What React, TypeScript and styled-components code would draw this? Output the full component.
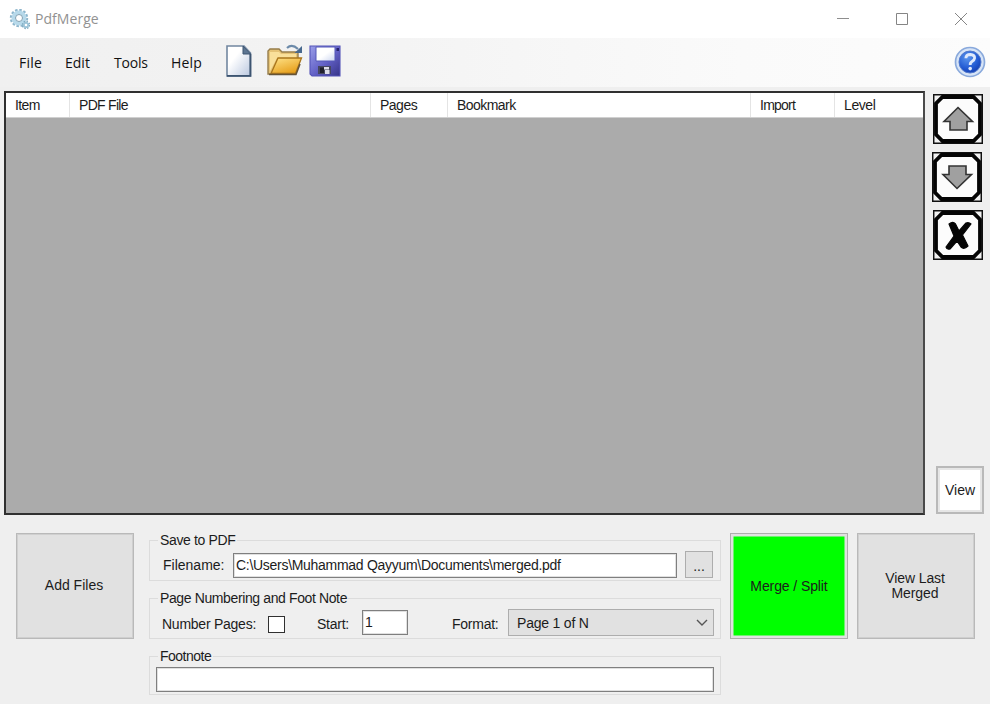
import React from "react";
import styled, { createGlobalStyle } from "styled-components";

const GlobalStyle = createGlobalStyle`
  * { box-sizing: border-box; }
  body { margin: 0; background: #efefef; overflow: hidden; }
  button, input { font: inherit; color: inherit; border-radius: 0; margin: 0; }
`;

const Window = styled.div`
  width: 990px;
  height: 704px;
  display: flex;
  flex-direction: column;
  background: #efefef;
  color: #1c1c1c;
  font: 14px/16px "Liberation Sans", Arial, sans-serif;
  overflow: hidden;
`;

const TitleBar = styled.header`
  height: 38px;
  flex: none;
  display: flex;
  align-items: center;
  background: #fff;
  padding-left: 9px;
`;

const Title = styled.span`
  margin-left: 5px;
  font: 14px/20px "Open Sans", "Noto Sans", sans-serif;
  letter-spacing: 0.05px;
  color: #929292;
  flex: 1;
`;

const Captions = styled.div`
  display: flex;
  width: 176px;
  justify-content: space-between;
`;

const CaptionButton = styled.button`
  width: 59px;
  height: 38px;
  border: 0;
  padding: 0;
  background: none;
  display: grid;
  place-items: center;
`;

const MenuBar = styled.nav`
  height: 49px;
  flex: none;
  display: flex;
  align-items: center;
  padding-left: 19px;
  background: linear-gradient(90deg, #f0f0f0, #f3f3f3 35%, #fafafa 75%, #fcfcfc);
`;

const MenuItem = styled.span<{ $w: number; $track?: number }>`
  width: ${(p) => p.$w}px;
  font: 14px/20px "Open Sans", "Noto Sans", sans-serif;
  letter-spacing: ${(p) => p.$track ?? 0}px;
  color: #111;
  white-space: nowrap;
`;

const Tools = styled.div`
  flex: 1;
  display: flex;
  align-items: center;
  margin-top: -3px;
`;

const Tool = styled.span<{ $gap?: number }>`
  display: flex;
  margin-left: ${(p) => p.$gap ?? 0}px;
`;

const HelpSlot = styled.span`
  display: flex;
  margin: -2px 4px 0 0;
`;

const Upper = styled.main`
  display: flex;
  height: 428px;
  flex: none;
  padding: 4px 0 0 4px;
`;

const Table = styled.section`
  width: 921px;
  height: 424px;
  border: 2px solid #303030;
  border-right-color: #4a4a4a;
  background: #ababab;
  flex: none;
`;

const HeaderRow = styled.div`
  display: flex;
  height: 25px;
  background: #fff;
  border-bottom: 1px solid #d0d0d0;
`;

const Heading = styled.div<{ $w: number; $track: number }>`
  width: ${(p) => p.$w}px;
  padding: 4px 0 0 9px;
  letter-spacing: ${(p) => p.$track}px;
  border-right: 1px solid #e4e4e4;
  white-space: nowrap;
  &:last-child { border-right: 0; }
`;

const Side = styled.aside`
  display: flex;
  flex-direction: column;
  padding: 3px 0 0 7px;
`;

const SquareButton = styled.button<{ $shift?: number }>`
  width: 50px;
  height: 50px;
  margin: 0 0 8px ${(p) => p.$shift ?? 0}px;
  border: 0;
  padding: 0;
  background: none;
  display: flex;
`;

const ViewButton = styled.button`
  width: 48px;
  height: 48px;
  margin: 198px 0 0 4px;
  padding: 0 0 1px;
  background: #fff;
  border: 2px solid #b9b9b9;
  box-shadow: inset 0 0 0 2px #e6e6e6;
`;

const Lower = styled.footer`
  flex: 1;
  display: flex;
  align-items: flex-start;
  gap: 9px;
  padding: 18px 0 0 16px;
`;

const BigButton = styled.button<{ $go?: boolean; $track?: number }>`
  width: 118px;
  height: 106px;
  padding: ${(p) => (p.$go ? "0" : "0 2px 1px 0")};
  line-height: 15px;
  letter-spacing: ${(p) => p.$track ?? 0}px;
  background: ${(p) => (p.$go ? "#00ff00" : "#e1e1e1")};
  border: ${(p) => (p.$go ? "1px solid #adadad" : "1.5px solid #b9b9b9")};
  box-shadow: ${(p) => (p.$go ? "inset 0 0 0 2.5px #e1e1e1" : "inset 0 0 0 1px #cfcfcf")};
  flex: none;
`;

const Groups = styled.div`
  display: flex;
  flex-direction: column;
  gap: 17px;
  padding-top: 7px;
  margin-left: 6px;
`;

const Group = styled.section<{ $h?: number }>`
  height: ${(p) => p.$h ?? 41}px;
  width: 572px;
  border: 1px solid #dcdcdc;
`;

const Legend = styled.div<{ $w: number; $track: number }>`
  width: ${(p) => p.$w}px;
  height: 16px;
  margin: -9px 0 0 8px;
  padding-left: 2px;
  letter-spacing: ${(p) => p.$track}px;
  background: #efefef;
  white-space: nowrap;
`;

const Line = styled.div<{ $pad: number; $top: number }>`
  display: flex;
  align-items: flex-start;
  padding-left: ${(p) => p.$pad}px;
  margin-top: ${(p) => p.$top}px;
`;

const Label = styled.span<{ $w: number; $track?: number; $top: number; $gap?: number }>`
  width: ${(p) => p.$w}px;
  flex: none;
  margin-left: ${(p) => p.$gap ?? 0}px;
  letter-spacing: ${(p) => p.$track ?? 0}px;
  padding-top: ${(p) => p.$top}px;
  white-space: nowrap;
`;

const Field = styled.input<{ $w: number }>`
  width: ${(p) => p.$w}px;
  height: 25px;
  padding: 0 0 1px 2px;
  border: 1.5px solid #7f7f7f;
  box-shadow: inset 0 0 0 1px #e0e0e0;
  background: #fff;
  letter-spacing: -0.29px;
  outline: 0;
`;

const Browse = styled.button`
  width: 28px;
  height: 27px;
  margin: -2px 0 0 8px;
  padding: 2px 0 0;
  line-height: 14px;
  background: #e1e1e1;
  border: 1px solid #adadad;
`;

const CheckBox = styled.span`
  width: 17px;
  height: 17px;
  margin: 6px 32px 0 0;
  border: 1.5px solid #303030;
  background: #fff;
`;

const Select = styled.div`
  width: 206px;
  height: 27px;
  margin-top: -1px;
  padding: 0 5px 0 8px;
  display: flex;
  align-items: center;
  justify-content: space-between;
  letter-spacing: -0.2px;
  background: #e1e1e1;
  border: 1px solid #adadad;
`;

const columns = [
  { name: "Item", w: 64, track: -0.6 },
  { name: "PDF File", w: 301, track: -0.7 },
  { name: "Pages", w: 77, track: -0.5 },
  { name: "Bookmark", w: 303, track: -0.55 },
  { name: "Import", w: 84, track: -0.75 },
  { name: "Level", w: 88, track: -0.4 },
];

const GearIcon = () => (
  <svg width="21" height="21" viewBox="0 0 21 21" fill="none">
    <circle cx="10" cy="9" r="8" stroke="#8db5cc" strokeWidth="2.4" strokeDasharray="2.5 1.69" />
    <circle cx="10" cy="9" r="5.5" stroke="#b7d9ea" strokeWidth="4" />
    <circle cx="10" cy="9" r="3.5" fill="#fff" stroke="#7f9fb1" />
    <circle cx="17" cy="16" r="3.4" stroke="#7faac0" strokeWidth="1.7" strokeDasharray="1.5 1.17" />
    <circle cx="17" cy="16" r="2.2" fill="#fff" stroke="#9dc4d8" strokeWidth="1.8" />
  </svg>
);

const NewIcon = () => (
  <svg width="26" height="32" viewBox="0 0 26 32">
    <defs>
      <linearGradient id="page" x1="0" y1="0" x2="1" y2="1">
        <stop offset="0.35" stopColor="#fff" />
        <stop offset="1" stopColor="#b9c7df" />
      </linearGradient>
    </defs>
    <path d="M1 1H18L24.5 8V31H1Z" fill="url(#page)" stroke="#7287a0" strokeWidth="1.6" />
    <path d="M1 30.8H24.4V9" fill="none" stroke="#3d5470" strokeWidth="1.8" />
    <path d="M17 1L24.5 9H17Z" fill="#5d7692" stroke="#3f5672" />
  </svg>
);

const OpenIcon = () => (
  <svg width="36" height="34" viewBox="0 0 36 34">
    <defs>
      <linearGradient id="folder" x1="0" y1="0" x2="0.6" y2="1">
        <stop offset="0" stopColor="#ffe48b" />
        <stop offset="1" stopColor="#e7a01c" />
      </linearGradient>
    </defs>
    <path d="M1 30V7L3 5H12L15 8H31V15L28 30Z" fill="#e5c376" stroke="#967d4b" strokeWidth="1.4" />
    <path d="M3 27V8H12L14 10H29V14H10Z" fill="#f9e09a" />
    <path d="M4 29.5L11 14H34.5L28.5 29.5Z" fill="url(#folder)" stroke="#a9751c" strokeWidth="1.3" />
    <path d="M2 30.5H29L33 20" fill="none" stroke="#655438" strokeWidth="1.5" />
    <path d="M20 4Q25 -0.5 31 5" fill="none" stroke="#6c8aa9" strokeWidth="2.2" />
    <path d="M35 2V9H27.5Z" fill="#48698e" />
  </svg>
);

const SaveIcon = () => (
  <svg width="32" height="32" viewBox="0 0 32 32">
    <defs>
      <linearGradient id="disk" x1="0" y1="0" x2="1" y2="1">
        <stop offset="0" stopColor="#9a9ee9" />
        <stop offset="0.55" stopColor="#615fc5" />
        <stop offset="1" stopColor="#363487" />
      </linearGradient>
      <linearGradient id="label" x1="0" y1="0" x2="1" y2="1">
        <stop offset="0.5" stopColor="#fff" />
        <stop offset="1" stopColor="#cbd5f0" />
      </linearGradient>
    </defs>
    <path d="M1 1H31V31H3L1 29Z" fill="url(#disk)" stroke="#5554b8" strokeWidth="1.1" />
    <path d="M7 2H26V16H7Z" fill="url(#label)" stroke="#5558b8" />
    <path d="M27.5 3H30V6H27.5Z" fill="#25236c" />
    <path d="M9 21H22V29H9Z" fill="#464760" />
    <path d="M11 22.5H15V28H11Z" fill="#20202c" />
    <path d="M15 22H20V24.5H15ZM16 25H20.5V29H16Z" fill="#dcdce8" />
  </svg>
);

const HelpIcon = () => (
  <svg width="32" height="32" viewBox="0 0 32 32">
    <defs>
      <radialGradient id="help" cx="0.38" cy="0.3" r="0.75">
        <stop offset="0" stopColor="#5b96ee" />
        <stop offset="0.65" stopColor="#235bd3" />
        <stop offset="1" stopColor="#153eb0" />
      </radialGradient>
    </defs>
    <circle cx="16" cy="16" r="14.5" fill="#d7e4f6" stroke="#89a9dc" strokeWidth="1.7" />
    <circle cx="16" cy="16" r="11" fill="url(#help)" stroke="#5279cc" />
    <path d="M11.8 12.3Q12 8.5 16.4 8.5Q20.8 8.8 20.6 12.2Q20.5 14 18 15.5Q16 16.7 16.2 19" fill="none" stroke="#dfe9fc" strokeWidth="2.8" />
    <circle cx="16.2" cy="22.6" r="1.8" fill="#dfe9fc" />
  </svg>
);

const Framed = ({ children }: { children: React.ReactNode }) => (
  <svg width="50" height="50" viewBox="0 0 50 50">
    <path d="M.7 .7H49.3V49.3H.7Z" fill="#f1f1f1" stroke="#111" strokeWidth="1.5" />
    <path d="M9.5 3H40.5L47 9.5V40.5L40.5 47H9.5L3 40.5V9.5Z" fill="#fcfcfc" stroke="#050505" strokeWidth="3.8" />
    {children}
  </svg>
);

const arrow = "M25 13.5L39.5 27.5H34V36H17V27.5H11Z";

export default function App() {
  return (
    <>
      <GlobalStyle />
      <Window>
        <TitleBar>
          <GearIcon />
          <Title>PdfMerge</Title>
          <Captions>
            <CaptionButton aria-label="Minimize">
              <svg width="12" height="12"><path d="M0 5.5H12" stroke="#8e8e8e" /></svg>
            </CaptionButton>
            <CaptionButton aria-label="Maximize">
              <svg width="12" height="12"><path d="M.5 .5H11.5V11.5H.5Z" fill="none" stroke="#858585" /></svg>
            </CaptionButton>
            <CaptionButton aria-label="Close">
              <svg width="12" height="12"><path d="M0 0L12 12M12 0L0 12" stroke="#858585" /></svg>
            </CaptionButton>
          </Captions>
        </TitleBar>
        <MenuBar>
          <MenuItem $w={46} $track={0.2}>File</MenuItem>
          <MenuItem $w={49}>Edit</MenuItem>
          <MenuItem $w={57} $track={-0.2}>Tools</MenuItem>
          <MenuItem $w={55} $track={0.15}>Help</MenuItem>
          <Tools>
            <Tool><NewIcon /></Tool>
            <Tool $gap={15}><OpenIcon /></Tool>
            <Tool $gap={6}><SaveIcon /></Tool>
          </Tools>
          <HelpSlot><HelpIcon /></HelpSlot>
        </MenuBar>
        <Upper>
          <Table>
            <HeaderRow>
              {columns.map((c) => (
                <Heading key={c.name} $w={c.w} $track={c.track}>{c.name}</Heading>
              ))}
            </HeaderRow>
          </Table>
          <Side>
            <SquareButton $shift={1} aria-label="Move up">
              <Framed><path d={arrow} fill="#a0a0a0" stroke="#333" strokeWidth="1.6" /></Framed>
            </SquareButton>
            <SquareButton aria-label="Move down">
              <Framed><path d={arrow} transform="translate(0 50) scale(1 -1)" fill="#a0a0a0" stroke="#333" strokeWidth="1.6" /></Framed>
            </SquareButton>
            <SquareButton $shift={1} aria-label="Remove">
              <Framed>
                <path d="M16 14Q20 11 22.5 14L26 21L33 13Q36 12 38 14L29.5 25L35 36Q31 40 28 37L24 31L17 39Q14 40 13 37L21 26Z" fill="#050505" stroke="#050505" strokeWidth="1.2" strokeLinejoin="round" />
              </Framed>
            </SquareButton>
            <ViewButton>View</ViewButton>
          </Side>
        </Upper>
        <Lower>
          <BigButton>Add Files</BigButton>
          <Groups>
            <Group>
              <Legend $w={79} $track={-0.35}>Save to PDF</Legend>
              <Line $pad={13} $top={5}>
                <Label $w={70} $top={4}>Filename:</Label>
                <Field $w={444} readOnly value="C:\Users\Muhammad Qayyum\Documents\merged.pdf" aria-label="Filename" />
                <Browse>...</Browse>
              </Line>
            </Group>
            <Group>
              <Legend $w={190} $track={-0.38}>Page Numbering and Foot Note</Legend>
              <Line $pad={12} $top={4}>
                <Label $w={106} $track={-0.25} $top={6}>Number Pages:</Label>
                <CheckBox />
                <Label $w={45} $track={-0.25} $top={6}>Start:</Label>
                <Field $w={46} readOnly value="1" aria-label="Start" />
                <Label $gap={44} $w={56} $track={-0.25} $top={6}>Format:</Label>
                <Select>
                  Page 1 of N
                  <svg width="12" height="7"><path d="M1 1L6 6L11 1" fill="none" stroke="#555" strokeWidth="1.4" /></svg>
                </Select>
              </Line>
            </Group>
            <Group $h={39}>
              <Legend $w={55} $track={-0.5}>Footnote</Legend>
              <Line $pad={6} $top={3}>
                <Field $w={558} readOnly value="" aria-label="Footnote" />
              </Line>
            </Group>
          </Groups>
          <BigButton $go $track={-0.1}>Merge / Split</BigButton>
          <BigButton $track={-0.1}>View Last<br />Merged</BigButton>
        </Lower>
      </Window>
    </>
  );
}
